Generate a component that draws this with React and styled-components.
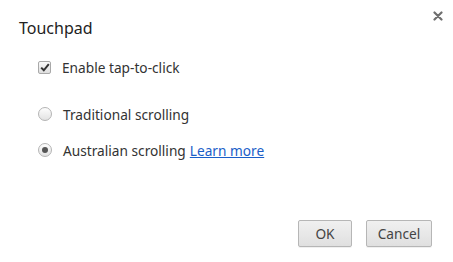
import React from "react";
import styled, { createGlobalStyle } from "styled-components";

const GlobalStyle = createGlobalStyle`
  html, body {
    margin: 0;
    padding: 0;
    background: #fff;
  }
  body {
    font-family: "Noto Sans", "Open Sans", sans-serif;
    color: #333;
  }
`;

const Dialog = styled.div`
  width: 453px;
  height: 262px;
  box-sizing: border-box;
  display: flex;
  flex-direction: column;
  padding: 0 21px 15px 19px;
`;

const Header = styled.div`
  display: flex;
  justify-content: space-between;
  align-items: flex-start;
`;

const Title = styled.h1`
  margin: 18px 0 0;
  font-size: 16px;
  line-height: 20px;
  font-weight: normal;
  color: #222;
`;

const Close = styled.button`
  margin: 11px -11px 0 0;
  width: 10px;
  height: 10px;
  padding: 0;
  border: 0;
  background: none;
  display: flex;
`;

const Options = styled.div`
  display: flex;
  flex-direction: column;
  padding-left: 19px;
`;

const Row = styled.label`
  display: flex;
  align-items: center;
  gap: 11px;
  height: 20px;
  margin-top: ${props => props.$gap}px;
  font-size: 13.7px;
  color: #333;
`;

const Box = styled.span`
  width: 13px;
  height: 13px;
  box-sizing: border-box;
  border: 1px solid #a9a9a9;
  border-radius: 2px;
  background: linear-gradient(#fafafa, #dedede);
  display: flex;
  align-items: center;
  justify-content: center;
`;

const Radio = styled.span`
  width: 14px;
  height: 14px;
  box-sizing: border-box;
  border: 1px solid #b4b4b4;
  border-radius: 50%;
  background: linear-gradient(#fdfdfd, #e2e2e2);
  display: flex;
  align-items: center;
  justify-content: center;

  &::after {
    content: "";
    display: ${props => (props.$checked ? "block" : "none")};
    width: 6px;
    height: 6px;
    border-radius: 50%;
    background: #555;
  }
`;

const Link = styled.a`
  color: #1a5ec8;
  text-decoration: underline;
  margin-left: 4px;
`;

const Footer = styled.div`
  margin-top: auto;
  display: flex;
  justify-content: flex-end;
  gap: 14px;
`;

const Button = styled.button`
  min-width: ${props => props.$width}px;
  height: 27px;
  box-sizing: border-box;
  border: 1px solid #b6b6b6;
  border-radius: 2px;
  background: linear-gradient(#f0f0f0, #e0e0e0);
  box-shadow: 0 1px 0 rgba(0, 0, 0, 0.06);
  font-family: "Noto Sans", "Open Sans", sans-serif;
  font-size: 13.7px;
  color: #444;
  padding: 0 10px;
`;

export default function App() {
  return (
    <>
      <GlobalStyle />
      <Dialog>
        <Header>
          <Title>Touchpad</Title>
          <Close aria-label="Close">
            <svg width="10" height="10" viewBox="0 0 10 10">
              <path
                d="M1.5 1.5 L8.5 8.5 M8.5 1.5 L1.5 8.5"
                stroke="#6f6f6f"
                strokeWidth="2.2"
                strokeLinecap="round"
              />
            </svg>
          </Close>
        </Header>
        <Options>
          <Row $gap={19}>
            <Box>
              <svg width="10" height="9" viewBox="0 0 10 9">
                <path
                  d="M1.2 4.6 L3.8 7.3 L8.8 1.2"
                  fill="none"
                  stroke="#333"
                  strokeWidth="2"
                />
              </svg>
            </Box>
            Enable tap-to-click
          </Row>
          <Row $gap={27}>
            <Radio />
            Traditional scrolling
          </Row>
          <Row $gap={16}>
            <Radio $checked />
            <span>
              Australian scrolling
              <Link href="#">Learn more</Link>
            </span>
          </Row>
        </Options>
        <Footer>
          <Button $width={54}>OK</Button>
          <Button $width={66}>Cancel</Button>
        </Footer>
      </Dialog>
    </>
  );
}
